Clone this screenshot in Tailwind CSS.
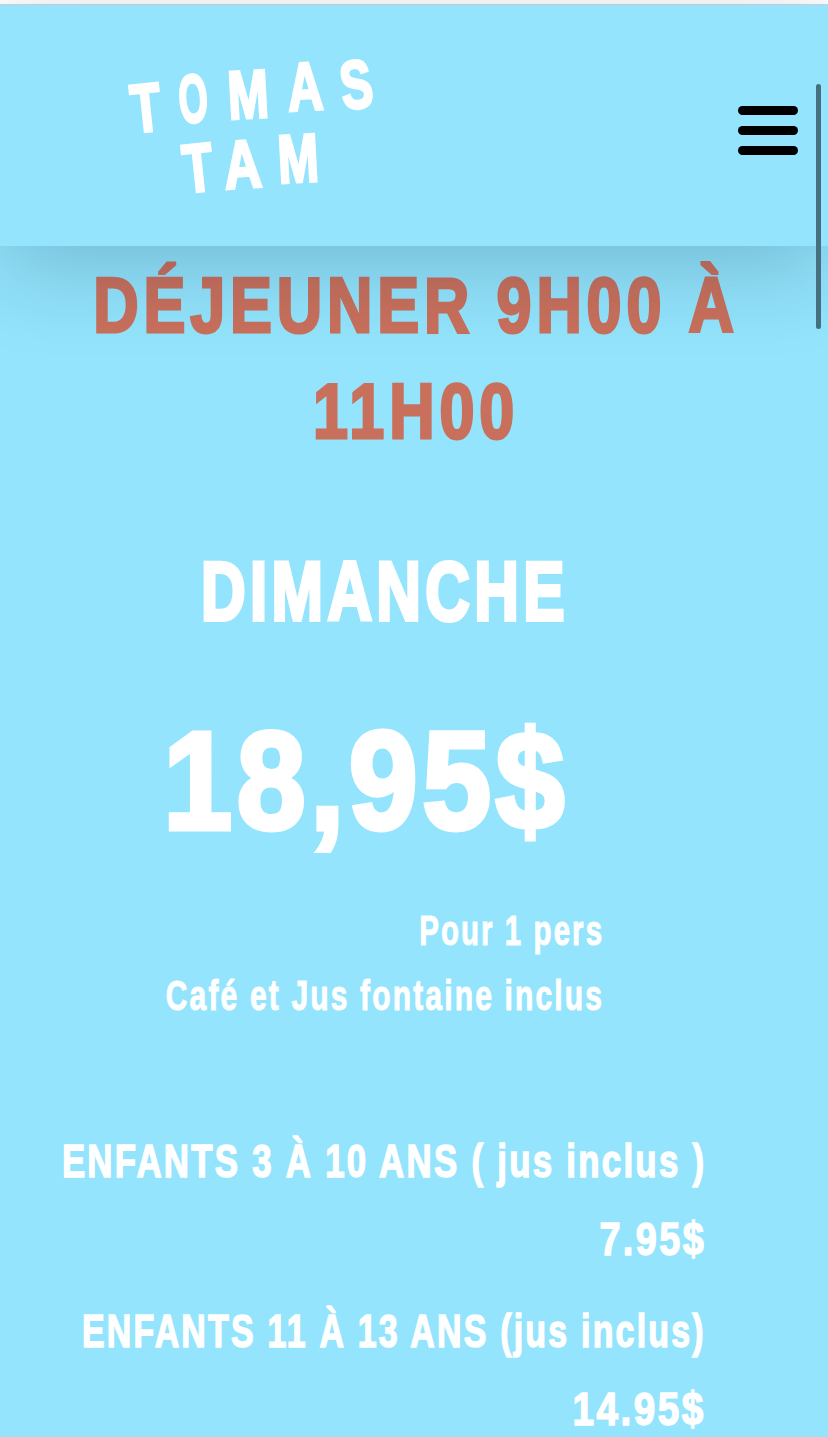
<!DOCTYPE html>
<html lang="fr">

<head>
  <meta charset="UTF-8" />
  <meta name="viewport" content="width=device-width, initial-scale=1.0" />
  <title>Tomas Tam - Déjeuner</title>
  <script src="https://cdn.jsdelivr.net/npm/@tailwindcss/browser@4"></script>
</head>

<body class="relative h-[1437px] w-[828px] overflow-hidden bg-white font-['Liberation_Sans',sans-serif] font-bold text-white">
  <div class="h-[5px] bg-white border-b border-gray-300"></div>

  <!-- Header -->
  <header class="relative z-10 flex h-[241px] items-start justify-between bg-[#93e4fc] shadow-[0_20px_90px_rgba(0,30,70,0.22)]">
    <div class="ml-[131px] mt-[54px] w-[245px] text-[68px] leading-[52px] [-webkit-text-stroke:3px_white]">
      <div class="flex justify-between">
        <span class="mt-[24px] w-[30px] origin-left -rotate-[6deg] scale-x-[.72]">T</span>
        <span class="mt-[14px] w-[30px] origin-left -rotate-[4deg] scale-x-[.55]">O</span>
        <span class="mt-[10px] w-[42px] origin-left -rotate-[3deg] scale-x-[.72]">M</span>
        <span class="mt-[2px] w-[36px] origin-left -rotate-[3deg] scale-x-[.72]">A</span>
        <span class="mt-[1px] w-[34px] origin-left -rotate-[8deg] scale-x-[.7]">S</span>
      </div>
      <div class="ml-[52px] flex w-[140px] justify-between">
        <span class="mt-[8px] w-[30px] origin-left -rotate-[6deg] scale-x-[.72]">T</span>
        <span class="mt-[4px] w-[36px] origin-left -translate-x-[5px] -rotate-[4deg] scale-x-[.76]">A</span>
        <span class="-mt-[2px] w-[42px] origin-left -translate-x-[3px] -rotate-[3deg] scale-x-[.72]">M</span>
      </div>
    </div>
    <div class="mr-[30px] mt-[101px] flex w-[60px] flex-col gap-[11px]">
      <div class="h-[9px] rounded-full bg-black"></div>
      <div class="h-[9px] rounded-full bg-black"></div>
      <div class="h-[9px] rounded-full bg-black"></div>
    </div>
  </header>

  <!-- Main -->
  <main class="h-[1191px] bg-[#93e4fc]">
    <h1 class="pl-[4px] pt-[6px] text-center text-[78px] leading-[106px] tracking-[6px] text-[#c9705c] [-webkit-text-stroke:3px_#c9705c]">
      <span class="block scale-x-[.806] whitespace-nowrap">DÉJEUNER 9H00 À</span>
      <span class="block scale-x-[.806] whitespace-nowrap">11H00</span>
    </h1>

    <h2 class="mt-[74px] scale-x-[.735] whitespace-nowrap pr-[79px] text-center text-[84px] leading-[106px] tracking-[6px] [-webkit-text-stroke:4px_white]">DIMANCHE</h2>
    <p class="mt-[52px] pr-[96px] text-center text-[140px] leading-[170px] tracking-[5px] [-webkit-text-stroke:5px_white]"><span class="inline-block scale-x-[.885]">18,95$</span></p>

    <div class="mt-[32px] flex flex-col items-end pr-[224px] text-[42px] leading-[65px] tracking-[3px] [-webkit-text-stroke:1px_white]">
      <p class="w-max origin-right scale-x-[.7]">Pour 1 pers</p>
      <p class="w-max origin-right scale-x-[.715]">Café et Jus fontaine inclus</p>
    </div>

    <div class="mt-[94px] flex flex-col items-end pr-[122px] text-[46px] leading-[78px] tracking-[3px] [-webkit-text-stroke:1.5px_white]">
      <p class="w-max origin-right scale-x-[.757]">ENFANTS 3 À 10 ANS ( jus inclus )</p>
      <p class="w-max origin-right scale-x-[.82]">7.95$</p>
      <p class="mt-[14px] w-max origin-right scale-x-[.7375]">ENFANTS 11 À 13 ANS (jus inclus)</p>
      <p class="w-max origin-right scale-x-[.84]">14.95$</p>
    </div>
  </main>

  <!-- Scrollbar overlay -->
  <div class="absolute left-[816px] top-[84px] z-20 h-[245px] w-[5px] rounded-full bg-[#44707f]"></div>
</body>

</html>
